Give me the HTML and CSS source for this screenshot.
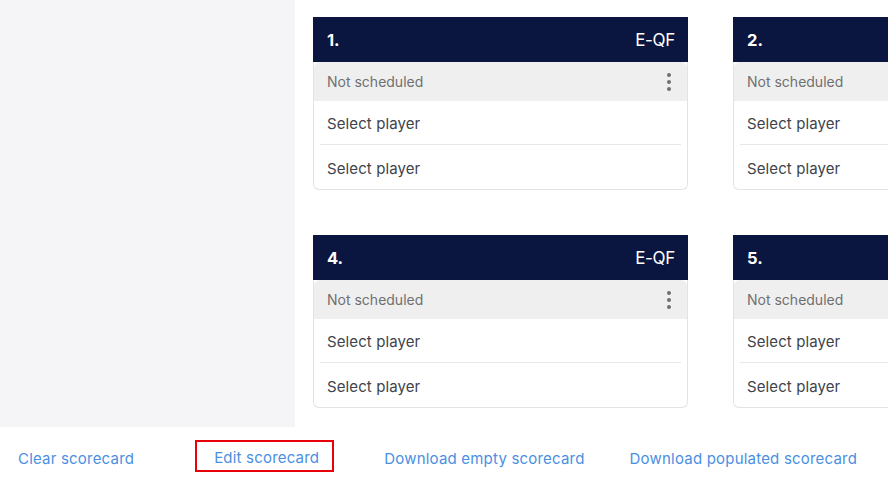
FILE: index.html
```html
<!DOCTYPE html>
<html>
<head>
<meta charset="utf-8">
<link rel="stylesheet" href="styles.css">
</head>
<body>
<div class="page">
  <div class="top">
    <div class="sidebar"></div>
    <div class="main">
      <div class="grid">
        <div class="card">
          <div class="card-head"><span class="num">1.</span><span class="round">E-QF</span></div>
          <div class="card-body">
            <div class="status"><span>Not scheduled</span><span class="kebab"><i></i><i></i><i></i></span></div>
            <div class="player first">Select player</div>
            <div class="player">Select player</div>
          </div>
        </div>
        <div class="card">
          <div class="card-head"><span class="num">2.</span></div>
          <div class="card-body">
            <div class="status"><span>Not scheduled</span></div>
            <div class="player first">Select player</div>
            <div class="player">Select player</div>
          </div>
        </div>
        <div class="card">
          <div class="card-head"><span class="num">4.</span><span class="round">E-QF</span></div>
          <div class="card-body">
            <div class="status"><span>Not scheduled</span><span class="kebab"><i></i><i></i><i></i></span></div>
            <div class="player first">Select player</div>
            <div class="player">Select player</div>
          </div>
        </div>
        <div class="card">
          <div class="card-head"><span class="num">5.</span></div>
          <div class="card-body">
            <div class="status"><span>Not scheduled</span></div>
            <div class="player first">Select player</div>
            <div class="player">Select player</div>
          </div>
        </div>
      </div>
    </div>
  </div>
  <div class="actions">
    <a class="link">Clear scorecard</a>
    <a class="link edit">Edit scorecard</a>
    <a class="link dl-empty">Download empty scorecard</a>
    <a class="link dl-pop">Download populated scorecard</a>
  </div>
</div>
</body>
</html>
```

FILE: styles.css
```css
html, body {
  margin: 0;
  padding: 0;
  background: #ffffff;
  overflow: hidden;
}
body {
  font-family: Inter, "Noto Sans", "Liberation Sans", sans-serif;
  width: 888px;
  height: 478px;
}
.page {
  display: flex;
  flex-direction: column;
  width: 888px;
}
.top {
  display: flex;
  height: 427px;
}
.sidebar {
  width: 295px;
  flex: none;
  background: #f5f5f7;
}
.main {
  flex: 1;
  overflow: hidden;
  padding: 17px 0 0 18px;
}
.grid {
  display: grid;
  grid-template-columns: 375px 375px;
  column-gap: 45px;
  row-gap: 45px;
  width: 795px;
}
.card-head {
  height: 45px;
  background: #0a1640;
  color: #ffffff;
  display: flex;
  align-items: center;
  justify-content: space-between;
  padding: 0 13px 0 14px;
}
.num {
  font-weight: 700;
  font-size: 16.5px;
}
.round {
  font-size: 17px;
  letter-spacing: -0.3px;
}
.card-body {
  border: 1px solid #e3e3e6;
  border-top: none;
  border-radius: 0 0 6px 6px;
  overflow: hidden;
}
.status {
  height: 39px;
  background: #efefef;
  color: #707070;
  font-size: 14px;
  display: flex;
  align-items: center;
  justify-content: space-between;
  padding: 0 13px 0 13px;
  border-radius: 6px 6px 0 0;
}
.kebab {
  display: flex;
  flex-direction: column;
  gap: 3px;
  margin-right: 3px;
}
.kebab i {
  display: block;
  width: 4px;
  height: 4px;
  border-radius: 50%;
  background: #6f6f6f;
}
.player {
  height: 44px;
  box-sizing: border-box;
  display: flex;
  align-items: center;
  padding: 2px 13px 0;
  font-size: 15px;
  letter-spacing: 0.1px;
  color: #40434b;
}
.player.first {
  margin: 0 6px;
  padding: 2px 7px 0;
  border-bottom: 1px solid #e8e8ea;
}
.actions {
  display: flex;
  align-items: flex-start;
  padding: 13px 0 0 18px;
  height: 38px;
}
.link {
  display: block;
  height: 32px;
  box-sizing: border-box;
  padding-top: 6px;
  line-height: 26px;
  font-size: 15px;
  letter-spacing: 0.2px;
  color: #4a90e2;
  white-space: nowrap;
  cursor: pointer;
}
.edit {
  margin-left: 61px;
  border: 2px solid #e8000b;
  padding: 4px 13px 0 17px;
  line-height: 24px;
}
.dl-empty {
  margin-left: 50px;
}
.dl-pop {
  margin-left: 45px;
}
```
